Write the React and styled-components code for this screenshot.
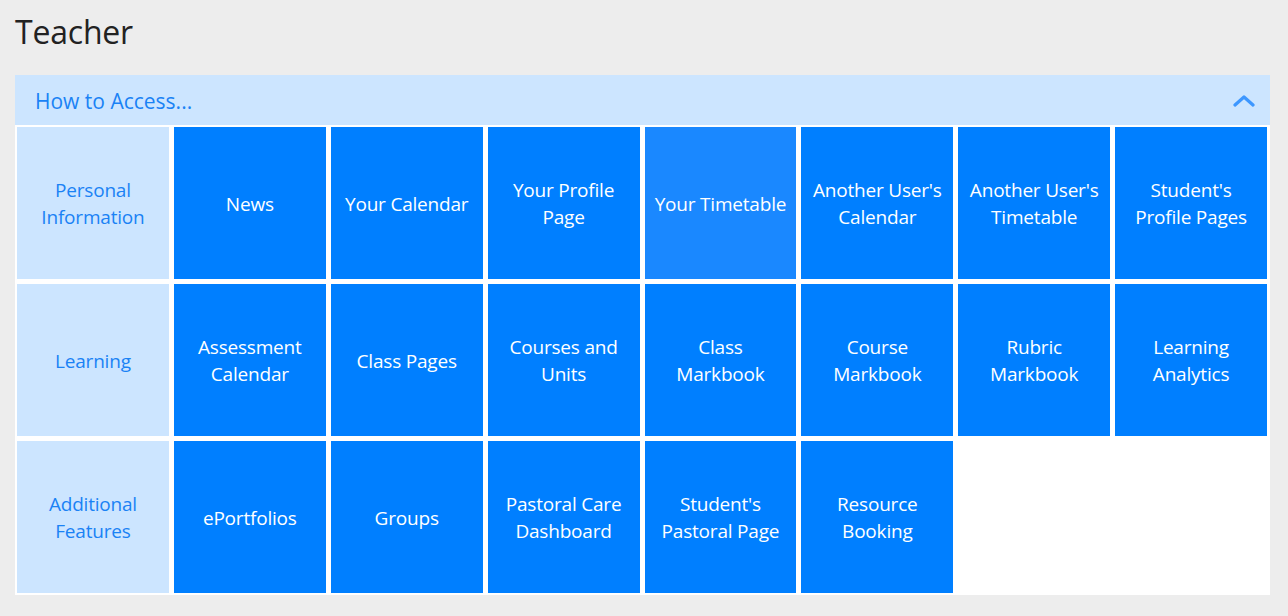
import styled, { createGlobalStyle } from "styled-components";

const GlobalStyle = createGlobalStyle`
  html, body {
    margin: 0;
    padding: 0;
    background: #ededed;
  }
  body {
    font-family: "Open Sans", "Noto Sans", sans-serif;
  }
`;

const Page = styled.div`
  padding: 10px 18px 20px 15px;
`;

const PageTitle = styled.h1`
  margin: 0 0 21px 0;
  font-size: 32px;
  font-weight: 400;
  color: #222;
  line-height: 44px;
  letter-spacing: -0.2px;
`;

const Panel = styled.section`
  background: #ffffff;
`;

const PanelHeader = styled.div`
  display: flex;
  align-items: center;
  justify-content: space-between;
  height: 50px;
  padding: 2px 15px 0 20px;
  box-sizing: border-box;
  background: #cce5ff;
  color: #1a82f5;
  font-size: 21px;
`;

const Chevron = styled.svg`
  width: 22px;
  height: 14px;
`;

const Grid = styled.div`
  display: grid;
  grid-template-columns: repeat(8, 1fr);
  grid-auto-rows: 152px;
  gap: 5px;
  padding: 2px 3px 2px 2px;
`;

const Tile = styled.div`
  display: flex;
  align-items: center;
  justify-content: center;
  text-align: center;
  padding: 2px 6px 0;
  font-size: 19px;
  line-height: 27px;
  letter-spacing: -0.2px;
  cursor: ${(p) => (p.$label ? "default" : "pointer")};
  background: ${(p) =>
    p.$label ? "#cce5ff" : p.$active ? "#1a88ff" : "#007fff"};
  color: ${(p) => (p.$label ? "#1a82f5" : "#ffffff")};
`;

const rows = [
  {
    label: "Personal Information",
    items: [
      "News",
      "Your Calendar",
      "Your Profile Page",
      "Your Timetable",
      "Another User's Calendar",
      "Another User's Timetable",
      "Student's Profile Pages",
    ],
  },
  {
    label: "Learning",
    items: [
      "Assessment Calendar",
      "Class Pages",
      "Courses and Units",
      "Class Markbook",
      "Course Markbook",
      "Rubric Markbook",
      "Learning Analytics",
    ],
  },
  {
    label: "Additional Features",
    items: [
      "ePortfolios",
      "Groups",
      "Pastoral Care Dashboard",
      "Student's Pastoral Page",
      "Resource Booking",
    ],
  },
];

const breaks = {
  "Personal Information": ["Personal", "Information"],
  "Additional Features": ["Additional", "Features"],
  "Your Profile Page": ["Your Profile", "Page"],
  "Another User's Calendar": ["Another User's", "Calendar"],
  "Another User's Timetable": ["Another User's", "Timetable"],
  "Student's Profile Pages": ["Student's", "Profile Pages"],
  "Assessment Calendar": ["Assessment", "Calendar"],
  "Courses and Units": ["Courses and", "Units"],
  "Class Markbook": ["Class", "Markbook"],
  "Course Markbook": ["Course", "Markbook"],
  "Rubric Markbook": ["Rubric", "Markbook"],
  "Learning Analytics": ["Learning", "Analytics"],
  "Pastoral Care Dashboard": ["Pastoral Care", "Dashboard"],
  "Student's Pastoral Page": ["Student's", "Pastoral Page"],
  "Resource Booking": ["Resource", "Booking"],
};

const TileText = ({ text }) => {
  const parts = breaks[text];
  if (!parts) return <span>{text}</span>;
  return (
    <span>
      {parts[0]}
      <br />
      {parts[1]}
    </span>
  );
};

const App = () => {
  return (
    <Page>
      <GlobalStyle />
      <PageTitle>Teacher</PageTitle>
      <Panel>
        <PanelHeader>
          How to Access...
          <Chevron viewBox="0 0 22 14">
            <path
              d="M2 11 L11 3 L20 11"
              fill="none"
              stroke="#3d97ff"
              strokeWidth="3.2"
              strokeLinecap="round"
              strokeLinejoin="round"
            />
          </Chevron>
        </PanelHeader>
        <Grid>
          {rows.map((row) => [
            <Tile $label key={row.label}>
              <TileText text={row.label} />
            </Tile>,
            ...row.items.map((item) => (
              <Tile key={item} $active={item === "Your Timetable"}>
                <TileText text={item} />
              </Tile>
            )),
          ])}
        </Grid>
      </Panel>
    </Page>
  );
};

export default App;
